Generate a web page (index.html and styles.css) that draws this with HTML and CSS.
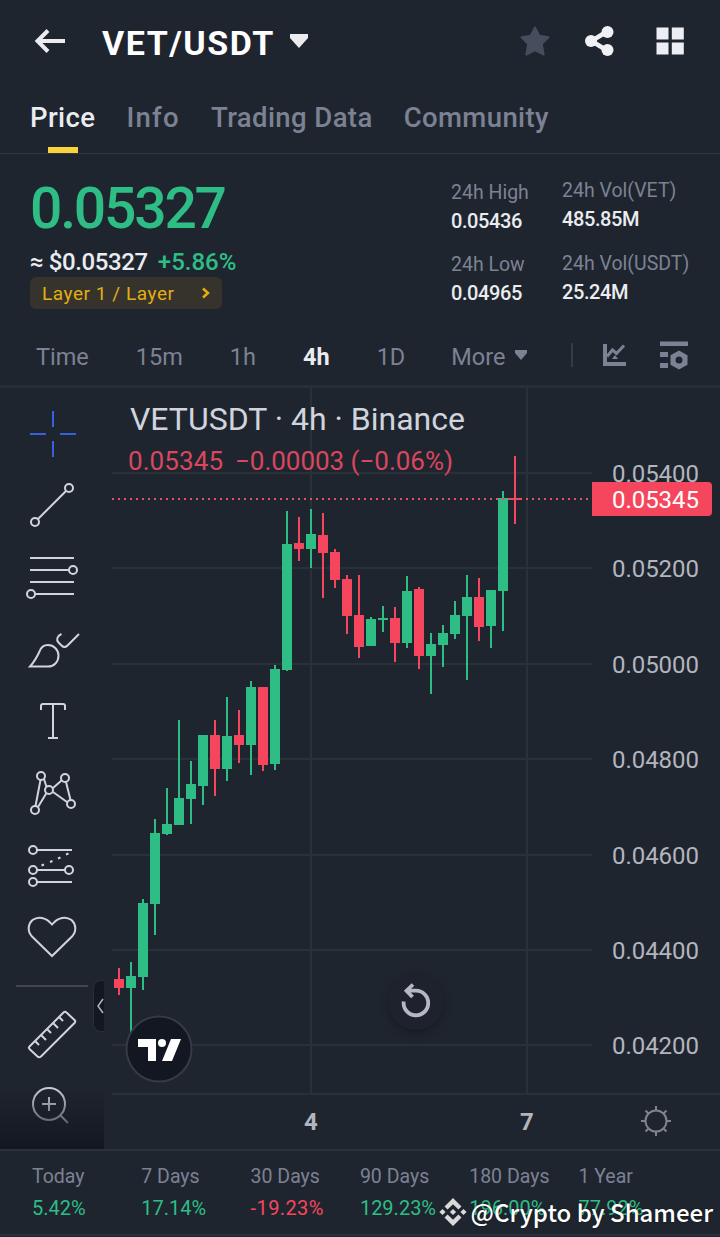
FILE: index.html
```html
<!DOCTYPE html>
<html lang="en">
<head>
    <meta charset="UTF-8">
    <meta name="viewport" content="width=device-width, initial-scale=1.0">
    <title>VET/USDT</title>
    <link rel="stylesheet" href="styles.css">
</head>
<body>
    <div class="topbar">
        <svg class="back" width="32" height="28" viewBox="0 0 32 28">
            <path d="M31 14H4M14 3.500L3.500 14L14 24.500" fill="none" stroke="#eaecef" stroke-width="4"/>
        </svg>
        <h1>VET/USDT</h1>
        <svg class="caret" width="20" height="16" viewBox="0 0 20 16">
            <path d="M1 1H19V5L10 15L1 5Z" fill="#eaecef"/>
        </svg>
        <div class="actions">
            <svg width="32" height="32" viewBox="0 0 32 32">
                <path d="M16 2.500L20.200 10.800L29.500 12.200L22.800 18.800L24.600 29.500L16 25.200L7.400 29.500L9.200 18.800L2.500 12.200L11.800 10.800Z" fill="#474d5c" stroke="#474d5c" stroke-width="2" stroke-linejoin="round"/>
            </svg>
            <svg width="32" height="32" viewBox="0 0 32 32">
                <path d="M23 6.500L7.500 16L23 25.500" fill="none" stroke="#f0f1f5" stroke-width="4.500"/>
                <circle cx="7" cy="16" r="6" fill="#f0f1f5"/>
                <circle cx="23.500" cy="7" r="6" fill="#f0f1f5"/>
                <circle cx="23.500" cy="25" r="6" fill="#f0f1f5"/>
            </svg>
            <svg width="32" height="32" viewBox="0 0 32 32">
                <path d="M2.500 2.500h12v12h-12zM17.800 2.500h12v12h-12zM2.500 17.500h12v12h-12zM17.800 17.500h12v12h-12z" fill="#eceef3"/>
            </svg>
        </div>
    </div>

    <div class="tabs">
        <a class="tab active">Price</a>
        <a class="tab info">Info</a>
        <a class="tab">Trading Data</a>
        <a class="tab">Community</a>
    </div>

    <div class="ticker">
        <div class="price-box">
            <div class="price">0.05327</div>
            <div class="sub-price"><span class="usd">≈ $0.05327</span><span class="up">+5.86%</span></div>
            <div class="tag">
                <span>Layer 1 / Layer</span>
                <svg width="10" height="12" viewBox="0 0 10 12">
                    <path d="M2 1.500L7 6L2 10.500" fill="none" stroke="#e3ae14" stroke-width="2.500"/>
                </svg>
            </div>
        </div>
        <div class="stats">
            <div class="stat-label">24h High</div>
            <div class="stat-value">0.05436</div>
            <div class="stat-label">24h Low</div>
            <div class="stat-value">0.04965</div>
        </div>
        <div class="stats volume">
            <div class="stat-label">24h Vol(VET)</div>
            <div class="stat-value">485.85M</div>
            <div class="stat-label">24h Vol(USDT)</div>
            <div class="stat-value">25.24M</div>
        </div>
    </div>

    <div class="intervals">
        <span>Time</span>
        <span>15m</span>
        <span>1h</span>
        <span class="active">4h</span>
        <span>1D</span>
        <span class="more">More<svg width="14" height="12" viewBox="0 0 14 12"><path d="M1 1H13V4L7 11L1 4Z" fill="#7c8293"/></svg></span>
        <div class="interval-tools">
            <i class="split"></i>
            <svg width="24" height="24" viewBox="0 0 24 24">
                <path d="M3 1V21H24" fill="none" stroke="#7c8293" stroke-width="4"/>
                <path d="M5 13.500L10.500 7L14.500 10.500L22 2.500" fill="none" stroke="#7c8293" stroke-width="3"/>
                <path d="M13 12L16 16H10Z" fill="#7c8293"/>
            </svg>
            <svg width="30" height="30" viewBox="0 0 30 30">
                <path d="M1 1.500H29V6H1zM1 12H9V17H1zM1 23H9V28H1z" fill="#7c8293"/>
                <path fill-rule="evenodd" d="M20 10.500L28.500 15.200V24.800L20 29.500L11.500 24.800V15.200ZM20 16.500A3.500 3.500 0 1 0 20 23.500A3.500 3.500 0 1 0 20 16.500Z" fill="#7c8293"/>
            </svg>
        </div>
    </div>

    <div class="chart">
        <div class="toolbar">
            <svg class="tool cross" viewBox="0 0 104 72"><path d="M53 13V29M53 43V59M30 36H46M60 36H76"/></svg>
            <svg class="tool" viewBox="0 0 104 72"><circle cx="69" cy="18" r="4"/><circle cx="35" cy="52" r="4"/><path d="M66 21L38 49"/></svg>
            <svg class="tool" viewBox="0 0 104 72"><path d="M30 16H74M30 28H69M30 40H74M35 52H74"/><circle cx="73" cy="28" r="4"/><circle cx="31" cy="52" r="4"/></svg>
            <svg class="tool" viewBox="0 0 104 72"><path d="M30 52.500C35 47 37 43 39.500 37.500C41 33 44 31 48 31C54 31 58.500 36 58.500 41.500C58.500 48 54 52.500 48 52.500ZM61.500 20C57 22 56 26 58.500 28.500L61.500 31.500C63.500 33.500 65.500 33.500 67.500 31.500L79 20"/></svg>
            <svg class="tool" viewBox="0 0 104 72"><path d="M41 24V20Q41 18 43 18H63Q65 18 65 20V24M53 18V52M48 52H58"/></svg>
            <svg class="tool" viewBox="0 0 104 72"><path d="M40.500 22L35.500 48M44 21L46.500 29M53 30L61.500 22.500M66 24L70.500 42M46.500 35L38 49M53 34L67 44"/><circle cx="41" cy="18" r="4"/><circle cx="65" cy="20" r="4"/><circle cx="49" cy="32" r="4"/><circle cx="35" cy="52" r="4"/><circle cx="71" cy="46" r="4"/></svg>
            <svg class="tool" viewBox="0 0 104 72"><circle cx="33" cy="20" r="4"/><circle cx="33" cy="40" r="4"/><circle cx="69" cy="40" r="4"/><circle cx="33" cy="52" r="4"/><path d="M37 20H72M37 40H65M37 52H72"/><path d="M41.500 35.500L44 34.500M50 32L52.500 31M58 28.500L60.500 27.500M66 24.500L68.500 23.500"/></svg>
            <svg class="tool" viewBox="0 0 104 72"><path d="M52 54L32 34.500C27 29 28 22 32.500 18C38 14 46 15 52 22.500C58 15 66 14 71.500 18C76 22 77 29 72 34.500Z"/></svg>
            <hr>
            <svg class="tool" viewBox="0 0 104 72"><path d="M29.500 48.500L63.500 14.500Q65 13 66.500 14.500L74.500 22Q76 23.500 74.500 25L41 58.500Q39 60 37.500 58.500L29.500 51Q28.300 49.500 29.500 48.500ZM35 43L39 47M41 37L46 42M47 31L51 35M53 25L58 30M59 19L63 23"/></svg>
            <svg class="tool" viewBox="0 0 104 72"><circle cx="49" cy="34" r="16"/><path d="M42 34H56M49 27V41M60.500 45.500L68 53"/></svg>
            <div class="fade"></div>
            <div class="handle"><svg width="8" height="18" viewBox="0 0 8 18"><path d="M7 2L2 9L7 16" fill="none" stroke="#b2b5be" stroke-width="1.500"/></svg></div>
        </div>
        <svg class="plot" width="616" height="761" viewBox="104 388 616 761">
            <g id="grid" stroke="#2a303a" stroke-width="2"></g>
            <text x="130" y="430" font-size="32" fill="#d1d4dc" textLength="335">VETUSDT · 4h · Binance</text>
            <g font-size="26" fill="#d9475e">
                <text x="128" y="470" textLength="95">0.05345</text>
                <text x="235" y="470" textLength="218">−0.00003 (−0.06%)</text>
            </g>
            <g id="candles"></g>
            <path d="M112 499H592" stroke="#e2526a" stroke-width="2" stroke-dasharray="2 4"/>
            <g id="axis" font-size="24" fill="#b2b5be"></g>
            <path d="M592 482H708Q712 482 712 486V512Q712 516 708 516H592Z" fill="#f6465d"/>
            <text x="612" y="508" font-size="24" fill="#fff" textLength="87">0.05345</text>
            <g font-size="24" font-weight="700" fill="#b2b5be" text-anchor="middle">
                <text x="311" y="1130">4</text>
                <text x="527" y="1130">7</text>
            </g>
            <!-- settings -->
            <g stroke="#7f838e" stroke-width="2" fill="none">
                <circle cx="656" cy="1121" r="10.500"/>
                <path d="M656 1106V1110M656 1132V1136M641 1121H645M667 1121H671M645.500 1110.500L648.500 1113.500M663.500 1128.500L666.500 1131.500M645.500 1131.500L648.500 1128.500M663.500 1113.500L666.500 1110.500"/>
            </g>
            <!-- TradingView -->
            <circle cx="159" cy="1049" r="32.500" fill="#131722" stroke="#363a45" stroke-width="2"/>
            <path d="M138 1039H156V1061H148V1047H138ZM171 1039H181L172 1061H162Z" fill="#fff"/>
            <circle cx="162" cy="1043" r="4" fill="#fff"/>
            <!-- reset -->
            <circle class="reset" cx="416" cy="1002" r="28" fill="#1e222d"/>
            <path d="M403.700 1001.500A12.300 12.300 0 1 0 416 990.700H407M413 984.500L406.500 990.700L412.500 997" fill="none" stroke="#b5b8c4" stroke-width="3.800"/>
        </svg>
    </div>

    <div class="performance">
        <div><span>Today</span><b class="up">5.42%</b></div>
        <div><span>7 Days</span><b class="up">17.14%</b></div>
        <div><span>30 Days</span><b class="down">-19.23%</b></div>
        <div><span>90 Days</span><b class="up">129.23%</b></div>
        <div><span>180 Days</span><b class="up">196.00%</b></div>
        <div><span>1 Year</span><b class="up">77.92%</b></div>
    </div>

    <div class="watermark">
        <svg width="28" height="28" viewBox="0 0 28 28">
            <path d="M14 0L22.500 8.500L19.400 11.600L14 6.200L8.600 11.600L5.500 8.500ZM14 28L22.500 19.500L19.400 16.400L14 21.800L8.600 16.400L5.500 19.500ZM14 10.900L17.100 14L14 17.100L10.900 14ZM3.500 10.900L6.600 14L3.500 17.100L0.400 14ZM24.500 10.900L27.600 14L24.500 17.100L21.400 14Z" fill="#d9d9d9"/>
        </svg>
        <span>@Crypto by Shameer</span>
    </div>

    <script src="script.js"></script>
</body>
</html>
```
FILE: styles.css
```css
* {
    box-sizing: border-box;
}

body {
    margin: 0;
    width: 720px;
    height: 1237px;
    overflow: hidden;
    position: relative;
    background-color: #1f252f;
    font-family: Roboto, sans-serif;
    color: #eaecef;
}

svg {
    display: block;
    flex-shrink: 0;
}

.up {
    color: #2ebd85;
}

.down {
    color: #f6465d;
}

/* Top bar */
.topbar {
    display: flex;
    align-items: center;
    height: 82px;
    padding: 0 34px 0 34px;
}

.topbar h1 {
    margin: 3px 0 0 36px;
    font-size: 34px;
    font-weight: 700;
    line-height: 40px;
    letter-spacing: 1.5px;
    color: #fff;
}

.caret {
    margin-left: 14px;
}

.actions {
    display: flex;
    gap: 38px;
    margin-left: auto;
}

.actions svg:first-child {
    margin-right: -5px;
}

/* Tabs */
.tabs {
    display: flex;
    gap: 31px;
    height: 72px;
    padding-left: 30px;
    border-bottom: 1px solid #313842;
}

.tab {
    display: flex;
    flex-direction: column;
    align-items: center;
    justify-content: space-between;
    font-size: 27.5px;
    font-weight: 500;
    line-height: 72px;
    letter-spacing: 0.4px;
    color: #7c8293;
}

.tab.info {
    letter-spacing: 1.3px;
}

.tab.active {
    color: #eaecef;
}

.tab.active::after {
    content: "";
    width: 30px;
    height: 6px;
    margin-top: -7px;
    background-color: #f8d33a;
}

/* Price and 24h stats */
.ticker {
    display: flex;
    height: 172px;
    padding-left: 30px;
}

.price-box {
    width: 421px;
    padding-top: 25px;
}

.price {
    font-size: 57px;
    font-weight: 500;
    line-height: 60px;
    letter-spacing: -2.2px;
    color: #2ebd85;
}

.sub-price {
    display: flex;
    gap: 10px;
    margin-top: 8px;
    font-size: 24px;
    font-weight: 500;
    line-height: 30px;
}

.sub-price .usd {
    letter-spacing: -0.4px;
}

.tag {
    display: flex;
    align-items: center;
    justify-content: space-between;
    width: 192px;
    height: 32px;
    padding: 0 11px 0 12px;
    border-radius: 6px;
    background-color: #35332b;
    color: #e3ae14;
    font-size: 19px;
    letter-spacing: 0.55px;
}

.stats {
    width: 111px;
    padding-top: 25px;
    white-space: nowrap;
}

.stats.volume {
    padding-top: 23px;
}

.stat-label {
    font-size: 19.5px;
    line-height: 28px;
    color: #7c8293;
}

.stat-value {
    margin-bottom: 16px;
    font-size: 20px;
    font-weight: 500;
    line-height: 28px;
    letter-spacing: -0.4px;
}

.volume .stat-value {
    margin-bottom: 17px;
}

/* Intervals */
.intervals {
    display: flex;
    align-items: center;
    gap: 47px;
    height: 62px;
    padding: 3px 29px 0 36px;
    border-bottom: 3px solid #282e38;
    font-size: 23.5px;
    color: #7c8293;
}

.intervals .active {
    font-weight: 700;
    color: #eaecef;
}

.more {
    display: flex;
    gap: 9px;
    margin-left: -1px;
}

.more svg {
    margin-top: 6px;
}

.interval-tools {
    display: flex;
    align-items: center;
    margin: 0 0 4px -4px;
}

.interval-tools svg {
    margin-left: 33px;
}

.interval-tools .split + svg {
    margin-left: 29px;
}

.split {
    width: 2px;
    height: 24px;
    background-color: #343b47;
}

/* Chart */
.chart {
    display: flex;
    height: 761px;
}

.toolbar {
    position: relative;
    width: 104px;
    padding-top: 10px;
}

.tool {
    width: 104px;
    height: 72px;
    fill: none;
    stroke: #d1d4dc;
    stroke-width: 2;
}

.cross {
    stroke: #3561e0;
}

.toolbar hr {
    width: 72px;
    height: 2px;
    margin: 11px 16px;
    border: 0;
    background-color: #434651;
}

.fade {
    position: absolute;
    left: 0;
    bottom: 0;
    width: 104px;
    height: 64px;
    background: linear-gradient(rgba(19, 23, 34, 0), #131722);
}

.handle {
    position: absolute;
    right: 0;
    top: 592px;
    display: flex;
    align-items: center;
    justify-content: flex-end;
    width: 11px;
    height: 52px;
    border: 1px solid #2a2e39;
    border-right: 0;
    border-radius: 8px 0 0 8px;
    background-color: #131722;
}

.plot text {
    font-family: Roboto, sans-serif;
}

.reset {
    filter: drop-shadow(0 3px 4px rgba(0, 0, 0, 0.3));
}

/* Performance */
.performance {
    display: grid;
    grid-template-columns: repeat(6, 109.3px);
    height: 87px;
    padding: 12px 0 0 32px;
    border-top: 2px solid #2b313b;
    border-bottom: 2px solid #2b313b;
}

.performance div {
    display: flex;
    flex-direction: column;
}

.performance span {
    font-size: 19.5px;
    line-height: 28px;
    color: #7c8293;
}

.performance b {
    font-size: 20px;
    font-weight: 400;
    line-height: 35px;
}

.performance .down {
    letter-spacing: 0.4px;
}

.watermark {
    position: absolute;
    right: 7px;
    bottom: 7px;
    display: flex;
    align-items: center;
    gap: 4px;
    font-family: "Noto Sans CJK SC", sans-serif;
    font-size: 24px;
    font-weight: 500;
    line-height: 36px;
    color: #fff;
    text-shadow: 0 0 2px rgba(0, 0, 0, 0.5);
}
```
FILE: script.js
```js
const NS = 'http://www.w3.org/2000/svg';

// color, high, low, body top, body bottom
const candles = [
    ['r', 968, 995, 979, 988],
    ['g', 962, 1040, 976, 988],
    ['g', 899, 990, 903, 977],
    ['g', 819, 935, 833, 904],
    ['g', 788, 835, 824, 834],
    ['g', 720, 825, 798, 825],
    ['g', 761, 824, 784, 799],
    ['g', 735, 805, 735, 786],
    ['r', 720, 796, 735, 769],
    ['g', 697, 781, 736, 769],
    ['r', 710, 763, 735, 745],
    ['g', 681, 775, 687, 745],
    ['r', 687, 771, 687, 765],
    ['g', 665, 770, 669, 764],
    ['g', 511, 671, 544, 670],
    ['r', 517, 561, 543, 549],
    ['g', 509, 568, 534, 549],
    ['r', 513, 598, 535, 553],
    ['r', 549, 588, 552, 580],
    ['r', 575, 634, 579, 616],
    ['r', 575, 658, 615, 647],
    ['g', 617, 646, 619, 646],
    ['g', 606, 632, 618, 620],
    ['r', 607, 662, 618, 643],
    ['g', 576, 648, 591, 643],
    ['r', 587, 669, 589, 656],
    ['g', 633, 694, 644, 656],
    ['g', 625, 667, 633, 645],
    ['g', 601, 639, 615, 634],
    ['g', 575, 680, 597, 616],
    ['r', 578, 641, 597, 627],
    ['g', 590, 648, 590, 626],
    ['g', 491, 631, 498, 591],
    ['r', 456, 524, 498, 500]
];

const levels = [
    ['0.05400', 473],
    ['0.05200', 568],
    ['0.05000', 664],
    ['0.04800', 759],
    ['0.04600', 855],
    ['0.04400', 950],
    ['0.04200', 1045]
];

function add(parent, name, attrs) {
    const el = document.createElementNS(NS, name);
    for (const key in attrs) {
        el.setAttribute(key, attrs[key]);
    }
    parent.appendChild(el);
    return el;
}

const grid = document.getElementById('grid');
const axis = document.getElementById('axis');
const candleGroup = document.getElementById('candles');

levels.forEach(([label, y]) => {
    add(grid, 'path', { d: `M112 ${y}H592` });
    add(axis, 'text', { x: 612, y: y + 9, textLength: 87 }).textContent = label;
});
add(grid, 'path', { d: 'M311 388V1094M527 388V1094M112 1094H720' });

candles.forEach(([color, high, low, top, bottom], i) => {
    const x = 119 + i * 12;
    const fill = color === 'g' ? '#2ebd85' : '#f6465d';
    add(candleGroup, 'rect', { x: x - 1, y: high, width: 2, height: low - high, fill });
    add(candleGroup, 'rect', { x: x - 5, y: top, width: 10, height: bottom - top, fill });
});
```
